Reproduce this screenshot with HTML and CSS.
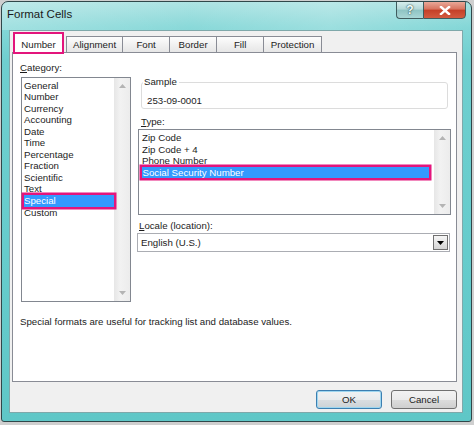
FILE: index.html
```html
<!DOCTYPE html>
<html>
<head>
<meta charset="utf-8">
<title>Format Cells</title>
<link rel="stylesheet" href="styles.css">
</head>
<body>
<div class="window">
  <div class="titlebar">
    <span class="title">Format Cells</span>
    <div class="ctrls">
      <span class="ctrl help">?</span>
      <span class="ctrl close">
        <svg width="12" height="9" viewBox="0 0 12 9"><path d="M2 1 L10 8 M10 1 L2 8" stroke="#fff" stroke-width="2.4" stroke-linecap="square" fill="none"/></svg>
      </span>
    </div>
  </div>
  <div class="dialog">
    <div class="tabs">
      <span class="tab active">Number</span>
      <span class="tab">Alignment</span>
      <span class="tab">Font</span>
      <span class="tab">Border</span>
      <span class="tab">Fill</span>
      <span class="tab wide">Protection</span>
    </div>
    <div class="panel">
      <div class="cols">
        <div class="left">
          <div class="label"><u>C</u>ategory:</div>
          <div class="listbox cat">
            <div class="items">
              <div class="item">General</div>
              <div class="item">Number</div>
              <div class="item">Currency</div>
              <div class="item">Accounting</div>
              <div class="item">Date</div>
              <div class="item">Time</div>
              <div class="item">Percentage</div>
              <div class="item">Fraction</div>
              <div class="item">Scientific</div>
              <div class="item">Text</div>
              <div class="item sel">Special</div>
              <div class="item">Custom</div>
            </div>
            <div class="vscroll">
              <span class="arr"><svg width="7" height="4" viewBox="0 0 7 4"><path d="M0 4 L3.5 0 L7 4 Z" fill="#b4b4b4"/></svg></span>
              <span class="arr"><svg width="7" height="4" viewBox="0 0 7 4"><path d="M0 0 L3.5 4 L7 0 Z" fill="#b4b4b4"/></svg></span>
            </div>
          </div>
        </div>
        <div class="right">
          <fieldset class="sample">
            <legend>Sample</legend>
            <div class="sample-val">253-09-0001</div>
          </fieldset>
          <div class="label type-label"><u>T</u>ype:</div>
          <div class="listbox type">
            <div class="items">
              <div class="item">Zip Code</div>
              <div class="item">Zip Code + 4</div>
              <div class="item">Phone Number</div>
              <div class="item sel">Social Security Number</div>
            </div>
            <div class="vscroll">
              <span class="arr"><svg width="7" height="4" viewBox="0 0 7 4"><path d="M0 4 L3.5 0 L7 4 Z" fill="#b4b4b4"/></svg></span>
              <span class="arr"><svg width="7" height="4" viewBox="0 0 7 4"><path d="M0 0 L3.5 4 L7 0 Z" fill="#b4b4b4"/></svg></span>
            </div>
          </div>
          <div class="label locale-label"><u>L</u>ocale (location):</div>
          <div class="select">
            <span class="select-val">English (U.S.)</span>
            <span class="drop"><svg width="7" height="4" viewBox="0 0 7 4"><path d="M0 0 L3.5 4 L7 0 Z" fill="#000"/></svg></span>
          </div>
        </div>
      </div>
      <p class="desc">Special formats are useful for tracking list and database values.</p>
    </div>
    <div class="buttons">
      <button class="btn default">OK</button>
      <button class="btn">Cancel</button>
    </div>
  </div>
</div>
</body>
</html>
```
FILE: styles.css
```css
* { box-sizing: border-box; }
html, body { margin: 0; padding: 0; }
body {
  width: 474px;
  height: 425px;
  background: #cfcfcf;
  font-family: "Liberation Sans", Arial, sans-serif;
  font-size: 9.7px;
  color: #1c1c1c;
  overflow: hidden;
}
.window {
  margin: 1px 0 0 1px;
  width: 471px;
  height: 421px;
  border: 1px solid #30474a;
  border-radius: 7px 7px 3px 3px;
  background: linear-gradient(180deg, #a9e2e2 0%, #84d7d7 6%, #6fcfcf 14%, #66cccc 60%, #5fc7c7 100%);
  display: flex;
  flex-direction: column;
  overflow: hidden;
}
.titlebar {
  height: 28px;
  display: flex;
  align-items: flex-start;
  justify-content: space-between;
  background: linear-gradient(90deg, rgba(255,255,255,0.25) 0%, rgba(255,255,255,0.05) 40%, rgba(255,255,255,0.2) 70%, rgba(0,0,0,0) 100%);
}
.title {
  padding: 6px 0 0 5px;
  font-size: 11.5px;
  line-height: 13px;
  color: #1a1a1a;
}
.ctrls {
  display: flex;
  margin: -1px 5px 0 0;
}
.ctrl {
  height: 18px;
  display: flex;
  align-items: center;
  justify-content: center;
  border: 1px solid #3f5c5e;
}
.help {
  width: 27px;
  border-radius: 0 0 0 4px;
  border-right: none;
  background: linear-gradient(180deg, #d6eded 0%, #b4d8d8 45%, #8ec3c3 50%, #a9d6d6 100%);
  color: #f4ffff;
  font-weight: bold;
  font-size: 12px;
  text-shadow: 0 0 2px #2b4b4c, 0 0 1px #2b4b4c;
}
.close {
  width: 43px;
  border-radius: 0 0 4px 0;
  background: linear-gradient(180deg, #e9a898 0%, #d7735e 45%, #c43f27 50%, #d35a3f 100%);
}
.dialog {
  flex: 1;
  margin: 0 8px 8px 7px;
  background: #f0f0f0;
  border: 1px solid #7fa8aa;
  padding: 5px 5px 0 2px;
  display: flex;
  flex-direction: column;
}
.tabs {
  display: flex;
  align-items: flex-end;
  height: 16px;
  padding-left: 3px;
}
.tab {
  height: 16px;
  min-width: 48px;
  padding: 0 6px;
  line-height: 15px;
  text-align: center;
  border: 1px solid #898c95;
  border-bottom: none;
  margin-right: -1px;
  background: linear-gradient(180deg, #fdfdfd 0%, #f1f1f1 50%, #e6e6e6 100%);
  color: #1c1c1c;
}
.tab.wide { min-width: 59px; }
.tab.active {
  position: relative;
  z-index: 2;
  width: 51px;
  height: 22px;
  margin: 0 2px -2px -2px;
  padding-top: 3px;
  line-height: 15px;
  border: 2px solid #e3157c;
  background: #ffffff;
}
.panel {
  height: 330px;
  background: #ffffff;
  border: 1px solid #898c95;
  padding: 9px 5px 0 7px;
}
.cols {
  display: flex;
  gap: 6px;
}
.left { width: 111px; }
.right {
  width: 314px;
  display: flex;
  flex-direction: column;
}
.label {
  line-height: 12px;
  height: 12px;
}
u { text-decoration: underline; text-underline-offset: 1px; }
.listbox {
  display: flex;
  border: 1px solid #828790;
  background: #fff;
}
.listbox.cat {
  margin: 3px 0 0 1px;
  width: 110px;
  height: 225px;
}
.items { flex: 1; }
.cat .items { padding-top: 1.5px; }
.item {
  height: 11.55px;
  line-height: 11.55px;
  padding-left: 2px;
  white-space: nowrap;
}
.item.sel {
  position: relative;
  background: #3399ff;
  color: #ffffff;
  box-shadow: 0 0 0 2.5px #e3157c;
}
.cat .item.sel {
  margin-left: 2px;
  padding-left: 0;
}
.vscroll {
  width: 16px;
  background: linear-gradient(90deg, #e6e6e6 0%, #f2f2f2 40%, #ececec 100%);
  display: flex;
  flex-direction: column;
  justify-content: space-between;
}
.arr {
  height: 16px;
  display: flex;
  align-items: center;
  justify-content: center;
}
.sample {
  margin: 14px 3px 0 4px;
  padding: 0 6px 1px 5px;
  border: 1px solid #dcdcdc;
  border-radius: 3px;
}
.sample legend {
  padding: 0 2px 0 1px;
  margin-left: -4px;
  line-height: 12px;
}
.sample-val {
  margin-top: 7px;
  line-height: 12px;
}
.type-label { margin: 7px 0 0 4px; }
.listbox.type {
  margin: 1px 0 0 1px;
  width: 313px;
  height: 86px;
}
.type .items { padding: 2px 0 0 1px; }
.type .item { padding-left: 2px; }
.type .item.sel { margin: 0 5px 0 1.5px; padding-left: 1px; }
.locale-label { margin: 5px 0 0 2px; }
.select {
  margin-top: 1px;
  width: 313px;
  height: 19px;
  border: 1px solid #abadb3;
  background: #fff;
  display: flex;
  align-items: center;
  justify-content: space-between;
  padding: 0 1px 0 3px;
}
.drop {
  width: 15px;
  height: 15px;
  border: 1px solid #707070;
  background: linear-gradient(180deg, #f6f6f6 0%, #e5e5e5 50%, #d4d4d4 100%);
  display: flex;
  align-items: center;
  justify-content: center;
}
.desc {
  margin: 14px 0 0 0;
  line-height: 12px;
}
.buttons {
  display: flex;
  justify-content: flex-end;
  gap: 9px;
  margin-top: 8px;
}
.btn {
  width: 66px;
  height: 19px;
  padding: 0;
  font-family: "Liberation Sans", Arial, sans-serif;
  font-size: 9.7px;
  color: #1c1c1c;
  border: 1px solid #707070;
  border-radius: 3px;
  background: linear-gradient(180deg, #f2f2f2 0%, #ebebeb 50%, #dddddd 51%, #cfcfcf 100%);
}
.btn.default {
  border-color: #3c7fb1;
  box-shadow: inset 0 0 0 1px #9ed6f0;
  background: linear-gradient(180deg, #f0f2f3 0%, #e8ebed 50%, #dadee1 51%, #ccd2d6 100%);
}
```
